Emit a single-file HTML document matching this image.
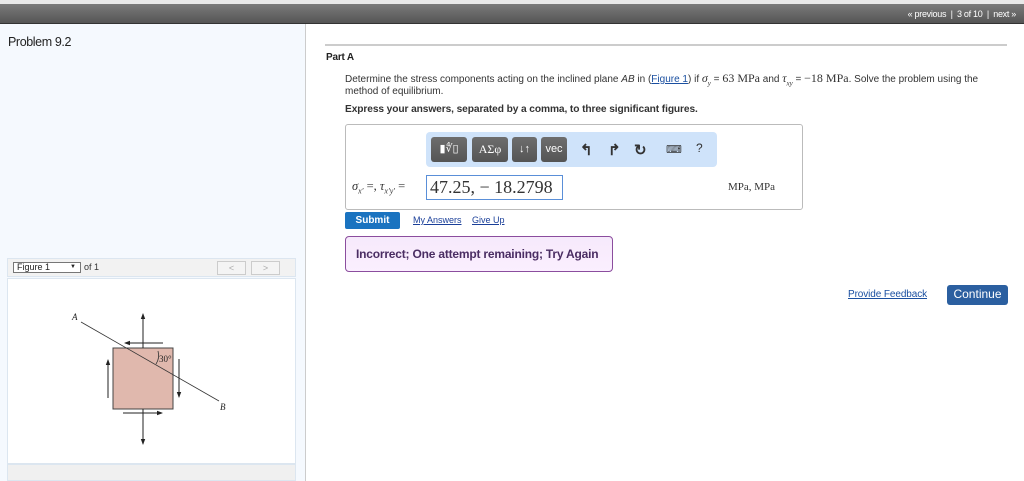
<!DOCTYPE html>
<html><head><meta charset="utf-8"><style>
*{margin:0;padding:0;box-sizing:border-box}
body{width:1024px;height:481px;overflow:hidden;background:#fff;font-family:"Liberation Sans",sans-serif;position:relative;color:#222}
.a{position:absolute;white-space:nowrap}
.btn{position:absolute;background:linear-gradient(#6e6e6e,#555);border-radius:3px;color:#fff;font-size:11px;text-align:center;line-height:25px;top:5px;height:25px}
.ic{position:absolute;top:9px;font-size:15px;color:#333;font-weight:bold}
</style></head><body>
<div class="a" style="left:0;top:0;width:1024px;height:4px;background:#e8e8e8"></div>
<div class="a" style="left:0;top:4px;width:1024px;height:20px;background:linear-gradient(#7a7a7a,#555);border-bottom:1px solid #333"></div>
<div class="a" style="right:8px;top:9px;color:#fff;font-size:9px;letter-spacing:-0.3px">« previous &nbsp;|&nbsp; 3 of 10 &nbsp;|&nbsp; next »</div>
<div class="a" style="left:0;top:24px;width:306px;height:457px;background:#f5f9fe;border-right:1px solid #ccc"></div>
<div class="a" style="left:8px;top:35px;font-size:12.5px;letter-spacing:-0.4px">Problem 9.2</div>
<div class="a" style="left:325px;top:44px;width:682px;height:2px;background:#ccc"></div>
<div class="a" style="left:326px;top:52px;font-size:10px;font-weight:bold;letter-spacing:-0.2px">Part A</div>
<div class="a" style="left:345px;top:71px;font-size:10px;letter-spacing:0;color:#333">Determine the stress components acting on the inclined plane <i>AB</i> in (<span style="color:#1a4fa0;text-decoration:underline">Figure 1</span>) if <i style="font-family:'Liberation Serif',serif;font-size:12px">σ<sub style="font-size:7px">y</sub></i> = <span style="font-family:'Liberation Serif',serif;font-size:12px">63 MPa</span> and <i style="font-family:'Liberation Serif',serif;font-size:12px">τ<sub style="font-size:7px">xy</sub></i> = <span style="font-family:'Liberation Serif',serif;font-size:12px">−18 MPa</span>. Solve the problem using the</div>
<div class="a" style="left:345px;top:86px;font-size:10px;color:#333">method of equilibrium.</div>
<div class="a" style="left:345px;top:104px;font-size:10.2px;font-weight:bold;letter-spacing:-0.1px;color:#333">Express your answers, separated by a comma, to three significant figures.</div>
<div class="a" style="left:345px;top:124px;width:458px;height:86px;border:1px solid #bbb;border-radius:3px"></div>
<div class="a" style="left:426px;top:132px;width:291px;height:35px;background:#cfe3fa;border-radius:4px">
<div class="btn" style="left:5px;width:36px">▮∜▯</div>
<div class="btn" style="left:46px;width:36px;font-family:'Liberation Serif',serif;font-size:12px">ΑΣφ</div>
<div class="btn" style="left:86px;width:25px">↓↑</div>
<div class="btn" style="left:115px;width:26px">vec</div>
<div class="ic" style="left:154px">↰</div>
<div class="ic" style="left:182px">↱</div>
<div class="ic" style="left:208px">↻</div>
<div class="ic" style="left:240px;font-size:11px;top:11px;font-weight:normal">⌨</div>
<div class="ic" style="left:270px;font-size:12px;font-weight:normal">?</div>
</div>
<div class="a" style="left:352px;top:179px;font-family:'Liberation Serif',serif;font-size:12.5px;font-style:italic;color:#333">σ<sub style="font-size:8px">x′</sub> <span style="font-style:normal">=,</span> τ<sub style="font-size:8px">x′y′</sub> <span style="font-style:normal">=</span></div>
<div class="a" style="left:426px;top:175px;width:137px;height:25px;border:1px solid #5a8fd8;font-family:'Liberation Serif',serif;font-size:18px;line-height:23px;padding-left:3px;color:#333">47.25, − 18.2798</div>
<div class="a" style="left:728px;top:181px;font-family:'Liberation Serif',serif;font-size:11px;color:#333">MPa, MPa</div>
<div class="a" style="left:345px;top:212px;width:55px;height:17px;background:#1a73c0;border-radius:2px;color:#fff;font-size:10px;font-weight:bold;text-align:center;line-height:17px">Submit</div>
<div class="a" style="left:413px;top:215px;font-size:9px;color:#1a3f99;text-decoration:underline">My Answers</div>
<div class="a" style="left:472px;top:215px;font-size:9px;color:#1a3f99;text-decoration:underline">Give Up</div>
<div class="a" style="left:345px;top:236px;width:268px;height:36px;border:1px solid #8b4d9e;border-radius:4px;background:linear-gradient(#f6e9fb,#fbefff);color:#4a2d63;font-size:12px;font-weight:bold;line-height:34px;padding-left:10px;letter-spacing:-0.2px">Incorrect; One attempt remaining; Try Again</div>
<div class="a" style="left:848px;top:289px;font-size:10px;color:#1a4fa0;text-decoration:underline;letter-spacing:-0.1px">Provide Feedback</div>
<div class="a" style="left:947px;top:285px;width:61px;height:20px;background:#2b5fa0;border-radius:3px;color:#fff;font-size:12px;text-align:center;line-height:19px">Continue</div>
<div class="a" style="left:7px;top:258px;width:289px;height:19px;background:#f2f2f2;border:1px solid #dce6f0"></div>
<div class="a" style="left:13px;top:262px;width:68px;height:11px;border:1px solid #777;background:#fff;font-size:9px;line-height:9px;padding-left:3px">Figure 1<span style="position:absolute;right:4px;font-size:6px">▼</span></div>
<div class="a" style="left:84px;top:262px;font-size:9px;color:#333">of 1</div>
<div class="a" style="left:217px;top:261px;width:29px;height:14px;border:1px solid #ccc;background:#f4f4f4;color:#aaa;font-size:9px;text-align:center;line-height:12px">&lt;</div>
<div class="a" style="left:251px;top:261px;width:29px;height:14px;border:1px solid #ccc;background:#f4f4f4;color:#aaa;font-size:9px;text-align:center;line-height:12px">&gt;</div>
<div class="a" style="left:7px;top:278px;width:289px;height:186px;background:#fff;border:1px solid #dce6f0"></div>
<div class="a" style="left:7px;top:464px;width:289px;height:17px;background:#f0f0f0;border:1px solid #dce6f0"></div>
<svg class="a" style="left:0;top:0" width="306" height="481">
<defs><marker id="m" markerWidth="6" markerHeight="6" refX="5" refY="3" orient="auto"><path d="M0,0.8 L6,3 L0,5.2z" fill="#222"/></marker></defs>
<rect x="113" y="348" width="60" height="61" fill="#e0b8ad" stroke="#444" stroke-width="1"/>
<line x1="143" y1="348" x2="143" y2="314" stroke="#222" marker-end="url(#m)"/>
<line x1="143" y1="409" x2="143" y2="444" stroke="#222" marker-end="url(#m)"/>
<line x1="163" y1="343" x2="125" y2="343" stroke="#222" marker-end="url(#m)"/>
<line x1="123" y1="413" x2="162" y2="413" stroke="#222" marker-end="url(#m)"/>
<line x1="108" y1="398" x2="108" y2="360" stroke="#222" marker-end="url(#m)"/>
<line x1="179" y1="359" x2="179" y2="397" stroke="#222" marker-end="url(#m)"/>
<line x1="81" y1="322" x2="219" y2="401" stroke="#333" stroke-width="0.8"/>
<path d="M158,351 Q160,358 156,364" fill="none" stroke="#333" stroke-width="0.8"/>
<text x="159" y="362" font-family="Liberation Serif,serif" font-size="9" fill="#222">30°</text>
<text x="72" y="320" font-family="Liberation Serif,serif" font-style="italic" font-size="9" fill="#222">A</text>
<text x="220" y="410" font-family="Liberation Serif,serif" font-style="italic" font-size="9" fill="#222">B</text>
</svg>
</body></html>
